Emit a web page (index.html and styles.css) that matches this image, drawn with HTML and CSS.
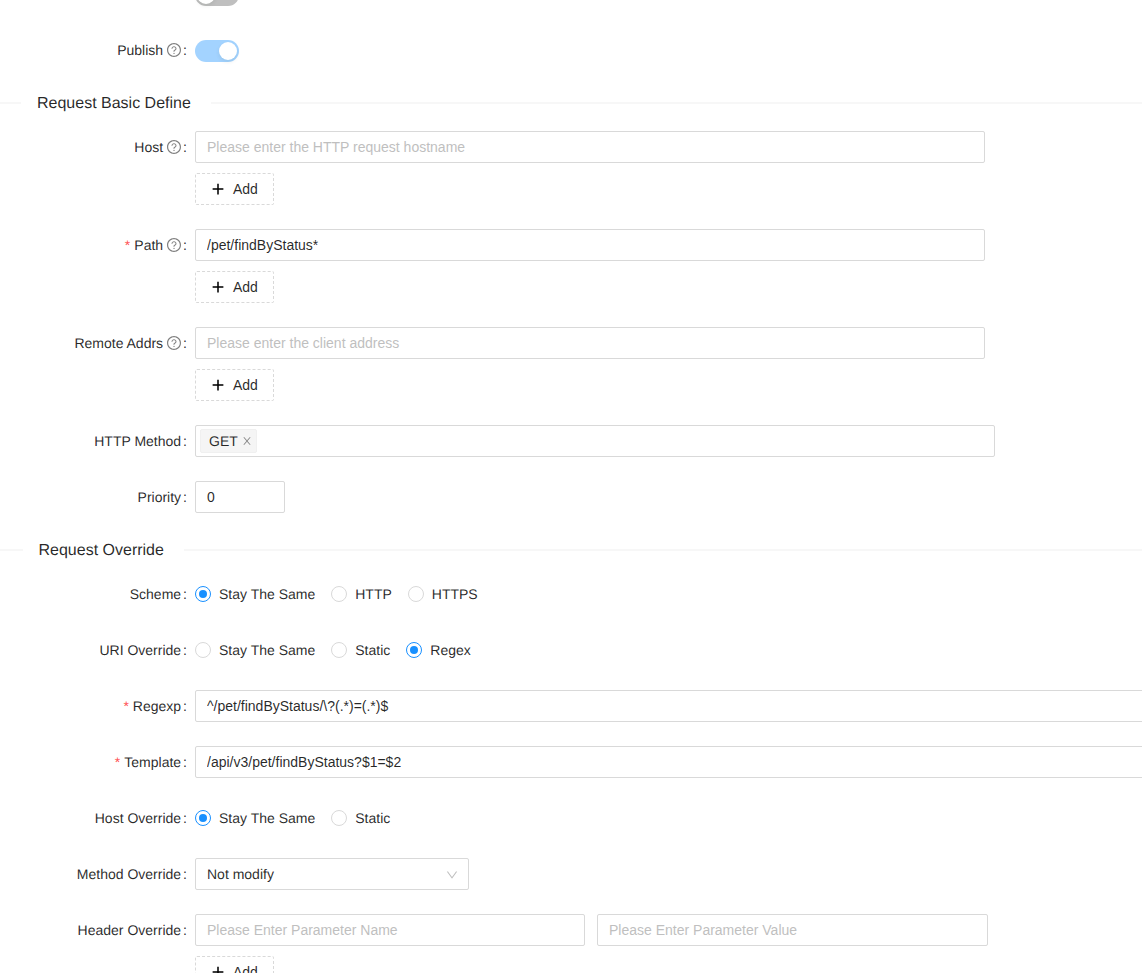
FILE: index.html
```html
<!DOCTYPE html>
<html lang="en">
<head>
<meta charset="utf-8">
<title>Route</title>
<link rel="stylesheet" href="styles.css">
</head>
<body>
<svg class="sprites" width="0" height="0" aria-hidden="true">
  <symbol id="i-help" viewBox="64 64 896 896">
    <path d="M512 64C264.6 64 64 264.6 64 512s200.6 448 448 448 448-200.6 448-448S759.4 64 512 64zm0 820c-205.4 0-372-166.6-372-372s166.6-372 372-372 372 166.6 372 372-166.6 372-372 372z"/>
    <path d="M623.6 316.7C593.6 290.4 554 276 512 276s-81.6 14.5-111.6 40.7C369.2 344 352 380.7 352 420v7.6c0 4.4 3.6 8 8 8h48c4.4 0 8-3.6 8-8V420c0-44.1 43.1-80 96-80s96 35.9 96 80c0 31.1-22 59.6-56.1 72.7-21.2 8.1-39.2 22.3-52.1 40.9-13.1 19-19.9 41.8-19.9 64.9V620c0 4.4 3.6 8 8 8h48c4.4 0 8-3.6 8-8v-22.7a48.3 48.3 0 0 1 30.9-44.8c59-22.7 97.1-74.7 97.1-132.5.1-39.3-17.1-76-48.3-103.3z"/>
    <path d="M472 732a40 40 0 1 0 80 0 40 40 0 1 0-80 0z"/>
  </symbol>
  <symbol id="i-plus" viewBox="64 64 896 896">
    <path d="M454 168h116v688H454z"/>
    <path d="M168 454h688v116H168z"/>
  </symbol>
  <symbol id="i-close" viewBox="64 64 896 896">
    <path d="M563.8 512l262.5-312.9c4.4-5.2.7-13.1-6.1-13.1h-79.8c-4.7 0-9.2 2.1-12.3 5.7L511.6 449.8 295.1 191.7c-3-3.6-7.5-5.7-12.3-5.7H203c-6.8 0-10.5 7.9-6.1 13.1L459.4 512 196.9 824.9A7.95 7.95 0 0 0 203 838h79.8c4.7 0 9.2-2.1 12.3-5.7l216.5-258.1 216.5 258.1c3 3.6 7.5 5.7 12.3 5.7h79.8c6.8 0 10.5-7.9 6.1-13.1L563.8 512z"/>
  </symbol>
  <symbol id="i-down" viewBox="64 64 896 896">
    <path d="M884 256h-75c-5.1 0-9.9 2.5-12.9 6.6L512 654.2 227.9 262.6c-3-4.1-7.8-6.6-12.9-6.6h-75c-6.5 0-10.3 7.4-6.5 12.7l352.6 486.1c12.8 17.6 39 17.6 51.7 0l352.6-486.1c3.9-5.3.1-12.7-6.4-12.7z"/>
  </symbol>
</svg>

<form class="form">
  <div class="row">
    <div class="label"></div>
    <div class="control"><span class="switch switch-off"><span class="knob"></span></span></div>
  </div>
  <div class="row">
    <div class="label">Publish<svg class="help"><use href="#i-help"/></svg><span class="colon">:</span></div>
    <div class="control"><span class="switch switch-on"><span class="knob"></span></span></div>
  </div>

  <div class="divider"><span class="line line-a"></span><span class="divider-text">Request Basic Define</span><span class="line line-rest"></span></div>

  <div class="row">
    <div class="label">Host<svg class="help"><use href="#i-help"/></svg><span class="colon">:</span></div>
    <div class="control stack">
      <input class="input w-790" placeholder="Please enter the HTTP request hostname">
      <button type="button" class="add"><svg class="plus"><use href="#i-plus"/></svg>Add</button>
    </div>
  </div>
  <div class="row">
    <div class="label"><span class="req">*</span>Path<svg class="help"><use href="#i-help"/></svg><span class="colon">:</span></div>
    <div class="control stack">
      <input class="input w-790" value="/pet/findByStatus*">
      <button type="button" class="add"><svg class="plus"><use href="#i-plus"/></svg>Add</button>
    </div>
  </div>
  <div class="row">
    <div class="label">Remote Addrs<svg class="help"><use href="#i-help"/></svg><span class="colon">:</span></div>
    <div class="control stack">
      <input class="input w-790" placeholder="Please enter the client address">
      <button type="button" class="add"><svg class="plus"><use href="#i-plus"/></svg>Add</button>
    </div>
  </div>
  <div class="row">
    <div class="label">HTTP Method<span class="colon">:</span></div>
    <div class="control">
      <div class="multi"><span class="tag">GET<svg class="tag-x"><use href="#i-close"/></svg></span></div>
    </div>
  </div>
  <div class="row">
    <div class="label">Priority<span class="colon">:</span></div>
    <div class="control"><input class="input w-90" value="0"></div>
  </div>

  <div class="divider"><span class="line line-b"></span><span class="divider-text">Request Override</span><span class="line line-rest"></span></div>

  <div class="row">
    <div class="label">Scheme<span class="colon">:</span></div>
    <div class="control radios">
      <label class="radio"><span class="dot checked"></span><span class="radio-text">Stay The Same</span></label>
      <label class="radio"><span class="dot"></span><span class="radio-text">HTTP</span></label>
      <label class="radio"><span class="dot"></span><span class="radio-text">HTTPS</span></label>
    </div>
  </div>
  <div class="row">
    <div class="label">URI Override<span class="colon">:</span></div>
    <div class="control radios">
      <label class="radio"><span class="dot"></span><span class="radio-text">Stay The Same</span></label>
      <label class="radio"><span class="dot"></span><span class="radio-text">Static</span></label>
      <label class="radio"><span class="dot checked"></span><span class="radio-text">Regex</span></label>
    </div>
  </div>
  <div class="row">
    <div class="label"><span class="req">*</span>Regexp<span class="colon">:</span></div>
    <div class="control"><input class="input w-wide" value="^/pet/findByStatus/\?(.*)=(.*)$"></div>
  </div>
  <div class="row">
    <div class="label"><span class="req">*</span>Template<span class="colon">:</span></div>
    <div class="control"><input class="input w-wide" value="/api/v3/pet/findByStatus?$1=$2"></div>
  </div>
  <div class="row">
    <div class="label">Host Override<span class="colon">:</span></div>
    <div class="control radios">
      <label class="radio"><span class="dot checked"></span><span class="radio-text">Stay The Same</span></label>
      <label class="radio"><span class="dot"></span><span class="radio-text">Static</span></label>
    </div>
  </div>
  <div class="row">
    <div class="label">Method Override<span class="colon">:</span></div>
    <div class="control">
      <div class="select"><span>Not modify</span><svg class="caret"><use href="#i-down"/></svg></div>
    </div>
  </div>
  <div class="row">
    <div class="label">Header Override<span class="colon">:</span></div>
    <div class="control stack">
      <div class="pair">
        <input class="input w-390" placeholder="Please Enter Parameter Name">
        <input class="input w-391" placeholder="Please Enter Parameter Value">
      </div>
      <button type="button" class="add"><svg class="plus"><use href="#i-plus"/></svg>Add</button>
    </div>
  </div>
</form>
</body>
</html>
```

FILE: styles.css
```css
* { box-sizing: border-box; }
html, body {
  margin: 0;
  height: 973px;
  overflow: hidden;
  background: #fff;
}
body {
  font-family: "Liberation Sans", Arial, sans-serif;
  font-size: 14px;
  line-height: 22px;
  color: rgba(0, 0, 0, 0.85);
  font-variant: tabular-nums;
  font-feature-settings: "tnum";
  text-rendering: geometricPrecision;
}
.sprites { display: block; height: 0; }
.form { margin-top: -22px; }

.row {
  display: flex;
  margin-bottom: 24px;
}
.label {
  flex: none;
  width: 195px;
  height: 32px;
  display: flex;
  align-items: center;
  justify-content: flex-end;
  white-space: nowrap;
}
.colon { margin: -1px 8px 0 2px; }
.req {
  color: #ff4d4f;
  margin-right: 4px;
}
.help {
  width: 14px;
  height: 14px;
  margin-left: 4px;
  fill: rgba(0, 0, 0, 0.5);
}
.control {
  flex: none;
  min-height: 32px;
  display: flex;
  align-items: center;
}
.stack {
  flex-direction: column;
  align-items: flex-start;
  gap: 10px;
}

.switch {
  position: relative;
  display: block;
  width: 44px;
  height: 22px;
  margin-top: 2px;
  border-radius: 11px;
}
.switch-off { background: #bfbfbf; }
.switch-on { background: #a3d3ff; }
.knob {
  position: absolute;
  top: 2px;
  left: 2px;
  width: 18px;
  height: 18px;
  border-radius: 50%;
  background: #fff;
  box-shadow: 0 2px 4px rgba(0, 35, 11, 0.08);
}
.switch-on .knob { left: 24px; }

.divider {
  display: flex;
  align-items: center;
  height: 24px;
  padding-top: 2px;
  margin-bottom: 17px;
  font-size: 16px;
  white-space: nowrap;
}
.divider-text {
  padding: 0 20px 0 16px;
  margin-top: 2px;
}
.line {
  height: 1px;
  background: #f0f0f0;
  margin-top: 1px;
  transform: translateY(-0.5px);
}
.line-a { flex: none; width: 21px; }
.line-b { flex: none; width: 22.5px; }
.line-rest { flex: 1; }

.input {
  display: block;
  height: 32px;
  padding: 4px 11px;
  border: 1px solid #d9d9d9;
  border-radius: 2px;
  background: #fff;
  font: inherit;
  color: rgba(0, 0, 0, 0.85);
  outline: none;
}
.input::placeholder { color: #bfbfbf; opacity: 1; }
.w-790 { width: 790px; }
.w-90 { width: 90px; }
.w-wide { width: 1000px; }
.w-390 { width: 390px; }
.w-391 { width: 391px; }
.pair { display: flex; gap: 12px; }

.add {
  display: flex;
  align-items: center;
  height: 32px;
  padding: 0 15px;
  border: 1px dashed #d9d9d9;
  border-radius: 2px;
  background: #fff;
  font: inherit;
  color: rgba(0, 0, 0, 0.85);
}
.plus {
  width: 14px;
  height: 14px;
  margin-right: 8px;
  fill: currentColor;
}

.multi {
  width: 800px;
  height: 32px;
  padding: 3px 4px;
  border: 1px solid #d9d9d9;
  border-radius: 2px;
  display: flex;
  align-items: center;
}
.tag {
  display: flex;
  align-items: center;
  height: 24px;
  padding: 0 4px 0 8px;
  background: #f5f5f5;
  border: 1px solid #f0f0f0;
  border-radius: 2px;
}
.tag-x {
  width: 10px;
  height: 10px;
  margin-left: 4px;
  fill: rgba(0, 0, 0, 0.45);
}

.radios { align-items: center; }
.radio {
  display: flex;
  align-items: center;
  margin-right: 8px;
}
.radio-text { padding: 0 8px; }
.dot {
  position: relative;
  width: 16px;
  height: 16px;
  border: 1px solid #d9d9d9;
  border-radius: 50%;
  background: #fff;
}
.dot.checked { border-color: #1890ff; }
.dot.checked::after {
  content: "";
  position: absolute;
  top: 3px;
  left: 3px;
  width: 8px;
  height: 8px;
  border-radius: 50%;
  background: #1890ff;
}

.select {
  width: 274px;
  height: 32px;
  padding: 0 11px;
  border: 1px solid #d9d9d9;
  border-radius: 2px;
  display: flex;
  align-items: center;
  justify-content: space-between;
}
.caret {
  width: 12px;
  height: 12px;
  margin: 2px -1px 0 0;
  fill: #bfbfbf;
}
```
